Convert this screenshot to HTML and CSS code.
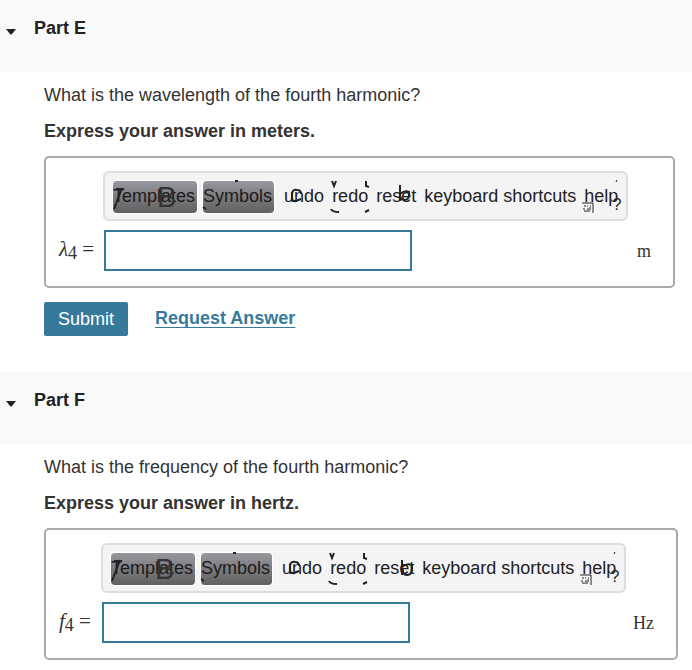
FILE: index.html
```html
<!DOCTYPE html>
<html lang="en">
<head>
    <meta charset="UTF-8">
    <meta name="viewport" content="width=device-width, initial-scale=1.0">
    <title>Fourth Harmonic</title>
    <link rel="stylesheet" href="styles.css">
</head>
<body>
    <section class="part">
        <header class="part-header">
            <svg class="caret" viewBox="0 0 10 6" aria-hidden="true"><path d="M0 0h10L6 5Q5 6 4 5Z"/></svg>
            <h2>Part E</h2>
        </header>
        <div class="part-body">
            <p class="question">What is the wavelength of the fourth harmonic?</p>
            <p class="instructions">Express your answer in meters.</p>
            <form>
                <div class="answer-box">
                    <div class="toolbar">
                        <button type="button" class="tool tool-dark">Templates
                            <svg class="icon" viewBox="0 0 84 32" aria-hidden="true"><path d="M1 28L9 7M3 8h8"/></svg>
                            <span class="bold-mark" aria-hidden="true">B</span>
                        </button>
                        <button type="button" class="tool tool-dark">Symbols
                            <svg class="icon" viewBox="0 0 71 32" aria-hidden="true"><path d="M32 0h3M0 26l3 2"/></svg>
                        </button>
                        <button type="button" class="tool tool-undo">undo
                            <svg class="icon" viewBox="0 0 40 32" aria-hidden="true"><path d="M8 19V12Q9 8 13 9Q17 9 17 13M8 14Q7 21 12 20L17 18"/></svg>
                        </button>
                        <button type="button" class="tool">redo
                            <svg class="icon" viewBox="0 0 36 32" aria-hidden="true"><path d="M0 0l2 5 2-5M34 0v5l3 1M-1 28q1 3 8 3M33 31l4-2"/></svg>
                        </button>
                        <button type="button" class="tool">reset
                            <svg class="icon" viewBox="0 0 40 32" aria-hidden="true"><path d="M24 4v16M24 13q5-4 9-2q1 8-5 8q-4 0-4-6"/></svg>
                        </button>
                        <button type="button" class="tool">keyboard shortcuts</button>
                        <button type="button" class="tool">help
                            <svg class="icon icon-thin" viewBox="0 0 34 32" aria-hidden="true"><path d="M-2 22H9V32M0 25h2m1 0h1m2 0h1M-1 28h2m2 0h2m1-2v3M0 30h6M32 1l1-2"/></svg>
                            <span class="help-mark" aria-hidden="true">?</span>
                        </button>
                    </div>
                    <label class="variable" for="wavelength"><i>λ</i><span class="index">4</span> =</label>
                    <div class="entry">
                        <input type="text" id="wavelength" autocomplete="off">
                        <span class="unit">m</span>
                    </div>
                </div>
                <div class="actions">
                    <button type="submit" class="submit">Submit</button>
                    <a href="#" class="request">Request Answer</a>
                </div>
            </form>
        </div>
    </section>

    <section class="part part-frequency">
        <header class="part-header">
            <svg class="caret" viewBox="0 0 10 6" aria-hidden="true"><path d="M0 0h10L6 5Q5 6 4 5Z"/></svg>
            <h2>Part F</h2>
        </header>
        <div class="part-body">
            <p class="question">What is the frequency of the fourth harmonic?</p>
            <p class="instructions">Express your answer in hertz.</p>
            <form>
                <div class="answer-box">
                    <div class="toolbar">
                        <button type="button" class="tool tool-dark">Templates
                            <svg class="icon" viewBox="0 0 84 32" aria-hidden="true"><path d="M1 28L9 7M3 8h8"/></svg>
                            <span class="bold-mark" aria-hidden="true">B</span>
                        </button>
                        <button type="button" class="tool tool-dark">Symbols
                            <svg class="icon" viewBox="0 0 71 32" aria-hidden="true"><path d="M32 0h3M0 26l3 2"/></svg>
                        </button>
                        <button type="button" class="tool tool-undo">undo
                            <svg class="icon" viewBox="0 0 40 32" aria-hidden="true"><path d="M8 19V12Q9 8 13 9Q17 9 17 13M8 14Q7 21 12 20L17 18"/></svg>
                        </button>
                        <button type="button" class="tool">redo
                            <svg class="icon" viewBox="0 0 36 32" aria-hidden="true"><path d="M0 0l2 5 2-5M34 0v5l3 1M-1 28q1 3 8 3M33 31l4-2"/></svg>
                        </button>
                        <button type="button" class="tool">reset
                            <svg class="icon" viewBox="0 0 40 32" aria-hidden="true"><path d="M28 7v15M28 14q5-4 10-2q1 10-5 10q-5 0-4-6"/></svg>
                        </button>
                        <button type="button" class="tool">keyboard shortcuts</button>
                        <button type="button" class="tool">help
                            <svg class="icon icon-thin" viewBox="0 0 34 32" aria-hidden="true"><path d="M-2 22H9V32M0 25h2m1 0h1m2 0h1M-1 28h2m2 0h2m1-2v3M0 30h6M32 1l1-2"/></svg>
                            <span class="help-mark" aria-hidden="true">?</span>
                        </button>
                    </div>
                    <label class="variable" for="frequency"><i>f</i><span class="index">4</span> =</label>
                    <div class="entry">
                        <input type="text" id="frequency" autocomplete="off">
                        <span class="unit">Hz</span>
                    </div>
                </div>
            </form>
        </div>
    </section>
</body>
</html>
```
FILE: styles.css
```css
* {
    box-sizing: border-box;
}

body {
    margin: 0;
    background-color: #fff;
    color: #333;
    font-family: "Liberation Sans", Arial, sans-serif;
    font-size: 18px;
    line-height: 24px;
}

.part-header {
    display: flex;
    gap: 18px;
    height: 72px;
    padding: 16px 6px;
    background-color: #f9f9f9;
    color: #222;
}

.part-header h2 {
    margin: 0;
    font-size: 18px;
    line-height: 24px;
}

.caret {
    width: 10px;
    height: 6px;
    margin-top: 13px;
    fill: #222;
}

.part-body {
    padding: 11px 17px 36px 44px;
}

.part-frequency .part-body {
    padding-right: 14px;
    padding-bottom: 10px;
}

.question,
.instructions {
    margin: 0 0 12px;
}

.instructions {
    font-weight: bold;
    margin-bottom: 13px;
}

.answer-box {
    display: grid;
    grid-template-columns: 44px 1fr;
    row-gap: 9px;
    padding: 13px 22px 15px 13px;
    border: 2px solid #aaa;
    border-radius: 5px;
}

.part-frequency .answer-box {
    grid-template-columns: 42px 1fr;
}

.toolbar {
    display: flex;
    gap: 8px;
    grid-column: 2;
    justify-self: start;
    padding: 8px 8px 6px;
    border: 2px solid #ddd;
    border-radius: 6px;
    background-color: #f4f4f4;
}

.tool {
    position: relative;
    height: 32px;
    padding: 0 0 2px;
    border: none;
    background: none;
    color: #222;
    font: inherit;
    white-space: nowrap;
    cursor: pointer;
}

.tool-dark {
    padding-right: 2px;
    margin-right: -2px;
    border-radius: 4px;
    background: linear-gradient(#97979f, #606060);
    box-shadow: 0 0 0 1px #fff;
    color: #1a1a1a;
}

.tool-undo {
    margin-left: 4px;
}

.icon {
    position: absolute;
    top: 0;
    left: 0;
    width: 100%;
    height: 100%;
    overflow: visible;
    fill: none;
    stroke: #222;
    stroke-width: 2;
}

.icon-thin {
    stroke-width: 1;
}

.bold-mark {
    position: absolute;
    top: 4px;
    left: 44px;
    color: #333;
    font-size: 29px;
}

.help-mark {
    position: absolute;
    top: 12px;
    right: -3px;
    font-size: 16px;
}

.variable {
    padding-top: 7px;
    font-family: "Liberation Serif", serif;
    font-size: 21px;
    white-space: nowrap;
}

.index {
    font-size: 18px;
    vertical-align: -3px;
}

.entry {
    display: flex;
    align-items: center;
    justify-content: space-between;
    padding-left: 1px;
}

.entry input {
    width: 308px;
    height: 41px;
    padding: 4px 8px;
    border: 2px solid #357a9b;
    border-radius: 0;
    font: inherit;
}

.unit {
    font-family: "Liberation Serif", serif;
}

.actions {
    display: flex;
    align-items: center;
    gap: 27px;
    margin-top: 14px;
}

.submit {
    width: 84px;
    height: 34px;
    padding: 0;
    border: none;
    border-radius: 2px;
    background-color: #357a9b;
    color: #fff;
    font: inherit;
    cursor: pointer;
}

.request {
    margin-bottom: 2px;
    color: #357a9b;
    font-weight: bold;
    text-decoration-thickness: 1px;
    text-underline-offset: 3px;
    text-decoration-skip-ink: none;
}
```
